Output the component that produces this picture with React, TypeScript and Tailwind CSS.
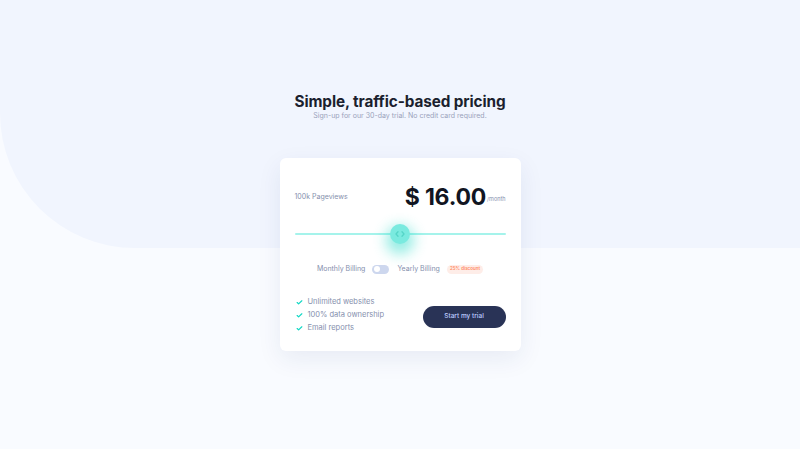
import { Check } from 'lucide-react';

const features = ['Unlimited websites', '100% data ownership', 'Email reports'];

function SliderThumb() {
  return (
    <div className="absolute left-1/2 top-1/2 -translate-x-1/2 -translate-y-1/2 h-[20px] w-[20px] rounded-full bg-[#7aeadf] shadow-[0_6px_14px_4px_rgba(16,213,194,0.45)] flex items-center justify-center">
      <svg width="10" height="6" viewBox="0 0 10 6" fill="none">
        <path d="M3 0.8L1 3L3 5.2" stroke="#55d5c8" strokeWidth="1.3" strokeLinecap="round" strokeLinejoin="round" />
        <path d="M7 0.8L9 3L7 5.2" stroke="#55d5c8" strokeWidth="1.3" strokeLinecap="round" strokeLinejoin="round" />
      </svg>
    </div>
  );
}

export default function App() {
  return (
    <div className="relative min-h-[449px] w-full overflow-hidden bg-[#f9fbff] font-['Inter',sans-serif]">
      {/* background shape */}
      <div className="absolute inset-x-0 top-0 h-[248px] bg-[#f1f5fe] rounded-bl-[135px]"></div>

      <div className="relative flex flex-col items-center pt-[92px]">
        <h1 className="text-[15.3px] leading-[19px] font-bold text-[#1b1f2e] tracking-[-0.1px]">Simple, traffic-based pricing</h1>
        <p className="mt-[0px] text-[7px] leading-[10px] text-[#9aa2bb]">Sign-up for our 30-day trial. No credit card required.</p>

        <div className="mt-[37px] w-[241px] h-[193px] rounded-[6px] bg-white shadow-[0_8px_24px_rgba(30,50,120,0.08)] px-[15px] pt-[26px]">
          <div className="flex items-center justify-between h-[26px]">
            <span className="text-[7px] text-[#858fad]">100k Pageviews</span>
            <div className="flex items-center">
              <span className="text-[23px] leading-[26px] font-bold text-[#111522] tracking-[-0.2px]">$ 16.00</span>
              <span className="ml-[1px] mt-[5px] text-[5.5px] text-[#858fad]">/month</span>
            </div>
          </div>

          <div className="relative mt-[14px] h-[20px]">
            <div className="absolute inset-x-0 top-1/2 -translate-y-1/2 h-[2px] rounded-full bg-[#a5f3eb]"></div>
            <SliderThumb />
          </div>

          <div className="mt-[20px] flex items-center justify-center text-[7px] text-[#858fad]">
            <span>Monthly Billing</span>
            <div className="ml-[7px] h-[9px] w-[17px] rounded-full bg-[#cdd7ee] p-[1.5px] flex items-center">
              <div className="h-[6px] w-[6px] rounded-full bg-white"></div>
            </div>
            <span className="ml-[8px]">Yearly Billing</span>
            <span className="ml-[7px] rounded-full bg-[#feede8] px-[3px] py-[1px] text-[4.5px] font-semibold text-[#ff8c66]">25% discount</span>
          </div>

          <div className="mt-[22px] flex items-center justify-between">
            <ul className="flex flex-col gap-[2px]">
              {features.map((f) => (
                <li key={f} className="flex items-center h-[11px] text-[7.5px] text-[#858fad]">
                  <Check size={7} strokeWidth={4} className="text-[#10d8c4] ml-[1px] mr-[5px]" />
                  {f}
                </li>
              ))}
            </ul>
            <button className="mt-[4px] h-[22px] w-[83px] rounded-full bg-[#293356] text-[6.5px] font-medium text-[#bdccff]">
              Start my trial
            </button>
          </div>
        </div>
      </div>
    </div>
  );
}
